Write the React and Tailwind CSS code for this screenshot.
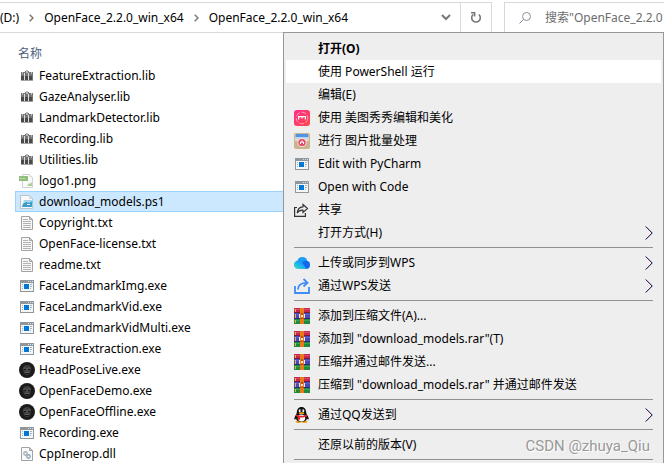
import React, { useState } from 'react';
import clsx from 'clsx';

const LibIcon = () => (
    <svg width="16" height="16" viewBox="0 0 16 16" shapeRendering="crispEdges" aria-hidden="true">
        <path fill="#757575" d="M2 4h4v9H2zM6 3h4v10H6zM10 4h4v9h-4z" />
        <path fill="#4a4a4a" d="M2 8h3v4H2zM6 8h3v4H6zM10 8h3v4h-3z" />
        <path fill="#b9b9b9" d="M3 4h1v2H3zM7 2h2v3H7zM12 4h1v2h-1z" />
        <path fill="#dedede" d="M5 5h1v8H5zM9 5h1v8H9z" />
        <path fill="#a3a3a3" d="M2 12h12v1H2z" />
    </svg>
);

const PngIcon = () => (
    <svg width="16" height="16" viewBox="0 0 16 16" aria-hidden="true">
        <path fill="#fafafa" stroke="#cfd3cf" d="M3.500 1.500h7l3 3v10h-10z" />
        <path fill="#dfe3df" d="M10.500 1.500v3h3z" />
        <path fill="#8fbf7a" d="M0 3h9v5H0z" />
        <path stroke="#c9e2bd" d="M1 5.500h6" strokeDasharray="2 1" />
        <path fill="#a9cf98" d="M8 13l2-3 1 1 2-2v4z" />
    </svg>
);

const Ps1Icon = () => (
    <svg width="16" height="16" viewBox="0 0 16 16" aria-hidden="true">
        <path fill="#f6f8f9" stroke="#b9c3ca" d="M1.500 1.500h9l3 3v10h-12z" />
        <path fill="#d5dce1" d="M10 1.500v3.500h3.500z" />
        <path fill="#a5d6ec" d="M5 6h9l-1 7H3z" />
        <path fill="#3b9bcb" d="M4 10l3-2 3 1 3.500-2-.8 6H3z" />
        <path stroke="#eaf7fd" fill="none" d="M8 10.500h3" />
    </svg>
);

const TxtIcon = () => (
    <svg width="16" height="16" viewBox="0 0 16 16" aria-hidden="true">
        <path fill="#f8f8f8" stroke="#a3a3a3" d="M2.500 1.500h8l3 3v10h-11z" />
        <path fill="#dddddd" stroke="#a3a3a3" d="M10.500 1.500v3h3z" />
        <path stroke="#b3b3b3" d="M4 4.500h5M4 6.500h8M4 8.500h8M4 10.500h8M4 12.500h8" />
    </svg>
);

const ExeIcon = () => (
    <svg width="16" height="16" viewBox="0 0 16 16" shapeRendering="crispEdges" aria-hidden="true">
        <path fill="#8f969c" d="M1 2h14v12H1z" />
        <path fill="#f5f6f7" d="M2 5h12v8H2z" />
        <path fill="#dfe2e5" d="M9 3h1v1H9zM11 3h1v1h-1zM13 3h1v1h-1z" />
        <path fill="#0078d7" d="M5 6h5v5H5z" />
        <path fill="#a9afb4" d="M3 6h1v1H3zM3 8h1v1H3zM3 10h1v1H3zM11 6h2v1h-2zM11 8h2v1h-2zM11 10h1v1h-1z" />
    </svg>
);

const FaceIcon = () => (
    <svg width="16" height="16" viewBox="0 0 16 16" aria-hidden="true">
        <circle cx="8" cy="8" r="8" fill="#1b1b1b" />
        <path fill="#3d3d3d" d="M4 6c0-4 8-4 8 0l-.5 4c-1 4-6 4-7 0z" />
        <path stroke="#6c6c6c" strokeWidth=".8" fill="none" d="M4.500 6.500l2-.7 1 1M8.500 6.800l1-1 2 .7M6 10.500h4M8 7v2" />
        <path fill="#151515" d="M5 7h2v1H5zM9 7h2v1H9zM6 11h4v1H6z" />
    </svg>
);

const DllIcon = () => (
    <svg width="16" height="16" viewBox="0 0 16 16" aria-hidden="true">
        <path fill="#fafafa" stroke="#a3a3a3" d="M2.500 1.500h8l3 3v10h-11z" />
        <path fill="#dedede" stroke="#a3a3a3" d="M10.500 1.500v3h3z" />
        <circle cx="6.500" cy="7.500" r="1.700" fill="none" stroke="#a3b1bc" strokeWidth="1.400" />
        <circle cx="9.500" cy="10.500" r="1.700" fill="none" stroke="#8ba9c0" strokeWidth="1.400" />
    </svg>
);

const MeituIcon = () => (
    <svg width="16" height="16" viewBox="0 0 16 16" aria-hidden="true">
        <defs>
            <linearGradient id="meitu" x1="0" y1="0" x2="1" y2="1">
                <stop offset="0" stopColor="#ff2c8c" />
                <stop offset="1" stopColor="#ff4747" />
            </linearGradient>
        </defs>
        <rect width="16" height="16" rx="3" fill="url(#meitu)" />
        <circle cx="8" cy="8" r="5.800" fill="none" stroke="#ffa9c4" strokeWidth=".9" strokeDasharray="5 1.500" />
        <path fill="none" stroke="#fff" strokeWidth="1.200" d="M4.600 9.500V6.600h6.800v2.900M8 6.600v1.900" />
    </svg>
);

const BatchIcon = () => (
    <svg width="16" height="16" viewBox="0 0 16 16" aria-hidden="true">
        <rect width="16" height="16" rx="2" fill="#c9b48f" />
        <path fill="#4f94e6" d="M2 1h12v3H2z" />
        <path fill="#b9d6f2" d="M1 4h14v2H1z" />
        <path fill="#e3dccb" d="M1 6h14v2H1z" />
        <circle cx="8" cy="9.500" r="4.600" fill="#f1dcd8" />
        <circle cx="8" cy="9.500" r="3.600" fill="#ea4468" />
        <path fill="none" stroke="#fff" d="M6.500 11V9h3v2M8 7.500v2" />
    </svg>
);

const ShareIcon = () => (
    <svg width="16" height="16" viewBox="0 0 16 16" fill="none" stroke="#333" strokeWidth="1.200" aria-hidden="true">
        <path d="M3 5.500H.600v8.900h10.800V11" />
        <path d="M9 2.500l4.500 4-4.500 4V8.200C6.500 8 4.500 9 3.200 11 3.500 7.500 5.500 5 9 4.800z" />
    </svg>
);

const CloudIcon = () => (
    <svg width="16" height="16" viewBox="0 0 16 16" aria-hidden="true">
        <defs>
            <linearGradient id="cloud" x1="0" y1="1" x2="1" y2="0">
                <stop offset="0" stopColor="#35e0c0" />
                <stop offset=".6" stopColor="#1aa5f5" />
                <stop offset="1" stopColor="#1473f0" />
            </linearGradient>
        </defs>
        <circle cx="8.400" cy="6.800" r="4.900" fill="#1c9df4" />
        <circle cx="11.900" cy="9.900" r="4.100" fill="#1268ec" />
        <path fill="url(#cloud)" d="M4.200 5.500c3.200 0 4.200 2.200 5.600 4.500S12 14 13 14H4.200a4.200 4.200 0 010-8.500z" />
    </svg>
);

const SendIcon = () => (
    <svg width="16" height="16" viewBox="0 0 16 16" fill="none" stroke="#3f8cf5" strokeWidth="1.800" aria-hidden="true">
        <path d="M1 8v7h14V9" />
        <path d="M4 11.500C4 7 7 4.800 13 4.800M9.500 1L13.500 4.800 9.500 8.500" />
    </svg>
);

const RarIcon = () => (
    <svg width="16" height="16" viewBox="0 0 16 16" shapeRendering="crispEdges" aria-hidden="true">
        <path fill="#c4284a" d="M0 0h16v5H0z" />
        <path fill="#d9486a" d="M0 1h16v1H0z" />
        <path fill="#4a48b8" d="M0 5h16v6H0z" />
        <path fill="#6361c8" d="M0 6h16v1H0z" />
        <path fill="#1f8a3c" d="M0 11h16v5H0z" />
        <path fill="#35a552" d="M0 12h16v1H0z" />
        <path fill="#7d1836" d="M0 4h16v1H0z" />
        <path fill="#2c2a78" d="M0 10h16v1H0z" />
        <path fill="#e87a1c" d="M6 0h4v16H6z" />
        <path fill="#f0e6dc" d="M5 6h1v4H5zM10 6h1v4h-1zM7 7h2v2H7z" />
        <path fill="#b85410" d="M7 5h2v2H7zM6 10h4v1H6z" />
        <path fill="#e3b341" d="M1 1h1v3H1zM1 6h1v4H1zM1 12h1v3H1z" />
    </svg>
);

const QqIcon = () => (
    <svg width="16" height="16" viewBox="0 0 16 16" aria-hidden="true">
        <ellipse cx="4.500" cy="14.800" rx="3" ry="1.200" fill="#f5a21b" />
        <ellipse cx="10.500" cy="14.800" rx="3" ry="1.200" fill="#f5a21b" />
        <path fill="#111" d="M2.800 5.500C2.800-1.800 12.200-1.800 12.200 5.500c0 1 .8 2 1.600 3.500.8 1.600 1.200 3 .6 3.400-.5.300-1-.4-1.500-1-.3 1.800-1.400 3.400-5.400 3.400s-5.100-1.600-5.400-3.400c-.5.600-1 1.300-1.500 1-.6-.4-.2-1.800.6-3.400.8-1.500 1.600-2.500 1.600-3.500z" />
        <ellipse cx="7.500" cy="11" rx="3.700" ry="3.400" fill="#fff" />
        <ellipse cx="5.900" cy="3.700" rx="1.200" ry="1.500" fill="#fff" />
        <ellipse cx="9.100" cy="3.700" rx="1.200" ry="1.500" fill="#fff" />
        <path fill="#111" d="M6 3.300h.8v1.200H6zM8.300 3.300h.8v1.200h-.8z" />
        <ellipse cx="7.500" cy="6.200" rx="2.800" ry=".9" fill="#f5a21b" />
        <path fill="#e6202a" d="M2.400 7.500c3 1.700 7.200 1.700 10.200 0l.5 1.700c-2 1.200-4.500 1.500-7 1.300v2.300H4V9.900c-.9-.2-1.600-.5-2.100-.8z" />
    </svg>
);

const SubmenuArrow = () => (
    <svg width="8" height="14" viewBox="0 0 8 14" fill="none" aria-hidden="true">
        <path stroke="#8cc0f0" d="M1.500.5L8 7l-6.500 6.500" />
        <path stroke="#6b2430" d="M.5.5L7 7 .5 13.500" />
    </svg>
);

const CrumbChevron = () => (
    <svg width="5" height="8" viewBox="0 0 5 8" fill="none" stroke="#777" strokeWidth="1.400" className="shrink-0" aria-hidden="true">
        <path d="M.7.700L4 4 .7 7.300" />
    </svg>
);

const files = [
    { name: 'FeatureExtraction.lib', icon: LibIcon },
    { name: 'GazeAnalyser.lib', icon: LibIcon },
    { name: 'LandmarkDetector.lib', icon: LibIcon },
    { name: 'Recording.lib', icon: LibIcon },
    { name: 'Utilities.lib', icon: LibIcon },
    { name: 'logo1.png', icon: PngIcon },
    { name: 'download_models.ps1', icon: Ps1Icon },
    { name: 'Copyright.txt', icon: TxtIcon },
    { name: 'OpenFace-license.txt', icon: TxtIcon },
    { name: 'readme.txt', icon: TxtIcon },
    { name: 'FaceLandmarkImg.exe', icon: ExeIcon },
    { name: 'FaceLandmarkVid.exe', icon: ExeIcon },
    { name: 'FaceLandmarkVidMulti.exe', icon: ExeIcon },
    { name: 'FeatureExtraction.exe', icon: ExeIcon },
    { name: 'HeadPoseLive.exe', icon: FaceIcon },
    { name: 'OpenFaceDemo.exe', icon: FaceIcon },
    { name: 'OpenFaceOffline.exe', icon: FaceIcon },
    { name: 'Recording.exe', icon: ExeIcon },
    { name: 'CppInerop.dll', icon: DllIcon },
];

// each inner array is a block of the menu, closed by a separator
const menuGroups = [
    [
        { label: '打开(O)', bold: true },
        { label: '使用 PowerShell 运行', active: true },
        { label: '编辑(E)' },
        { label: '使用 美图秀秀编辑和美化', icon: MeituIcon },
        { label: '进行 图片批量处理', icon: BatchIcon },
        { label: 'Edit with PyCharm', icon: ExeIcon },
        { label: 'Open with Code', icon: ExeIcon },
        { label: '共享', icon: ShareIcon },
        { label: '打开方式(H)', submenu: true },
    ],
    [
        { label: '上传或同步到WPS', icon: CloudIcon, submenu: true },
        { label: '通过WPS发送', icon: SendIcon, submenu: true },
    ],
    [
        { label: '添加到压缩文件(A)...', icon: RarIcon },
        { label: '添加到 "download_models.rar"(T)', icon: RarIcon },
        { label: '压缩并通过邮件发送...', icon: RarIcon },
        { label: '压缩到 "download_models.rar" 并通过邮件发送', icon: RarIcon },
    ],
    [{ label: '通过QQ发送到', icon: QqIcon, submenu: true }],
    [{ label: '还原以前的版本(V)' }],
];

const AddressBar = () => (
    <header className="flex gap-3 pt-[2px]">
        <nav aria-label="地址" className="flex h-[31px] min-w-0 flex-1 items-center border border-l-0 border-[#d9d9d9]">
            <div className="flex min-w-0 flex-1 items-center gap-[10px] whitespace-nowrap">
                <button type="button">(D:)</button>
                <CrumbChevron />
                <button type="button">OpenFace_2.2.0_win_x64</button>
                <CrumbChevron />
                <button type="button">OpenFace_2.2.0_win_x64</button>
            </div>
            <button type="button" aria-label="展开" className="px-[9px]">
                <svg width="10" height="7" viewBox="0 0 10 7" fill="none" stroke="#777" strokeWidth="2">
                    <path d="M1 1l4 4 4-4" />
                </svg>
            </button>
            <button type="button" aria-label="刷新" className="flex h-full w-[31px] items-center justify-center border-l border-[#d9d9d9]">
                <svg width="12" height="13" viewBox="0 0 12 13" fill="none" stroke="#777" strokeWidth="1.600">
                    <path d="M8.800 3.500A4.300 4.300 0 1 1 3.200 3.500" />
                    <path d="M1 1.800h3.600v3.600" />
                </svg>
            </button>
        </nav>
        <label className="flex h-[31px] w-40 items-center gap-[14px] border border-r-0 border-[#d9d9d9] pl-[14px]">
            <svg width="12" height="12" viewBox="0 0 12 12" fill="none" stroke="#8a8f99" className="shrink-0" aria-hidden="true">
                <circle cx="7.500" cy="4.500" r="4" />
                <path d="M4.700 7.300L.5 11.500" />
            </svg>
            <input type="text" aria-label="搜索" placeholder={'搜索"OpenFace_2.2.0'} className="w-full min-w-0 outline-none placeholder:text-[#6d6d6d]" />
        </label>
    </header>
);

const FileList = ({ selected, onSelect }) => (
    <main className="pl-[15px]">
        <h2 className="flex h-8 items-center pt-[10px] pl-[3px] text-[#4c607a]">名称</h2>
        <ul>
            {files.map(({ name, icon: Icon }) => (
                <li key={name}>
                    <button
                        type="button"
                        onClick={() => onSelect(name)}
                        className={clsx(
                            'flex h-[21px] w-full items-center gap-1 border pl-[3px] text-left',
                            name === selected ? 'border-[#99d1ff] bg-[#cce8ff]' : 'border-transparent'
                        )}
                    >
                        <Icon />
                        {name}
                    </button>
                </li>
            ))}
        </ul>
    </main>
);

const ContextMenu = () => (
    <div role="menu" className="absolute top-8 right-0 left-[283px] border border-[#979797] bg-[#eeeeee] px-[2px] pt-1">
        {menuGroups.map((group, i) => (
            <div key={i} role="group">
                {group.map(({ label, icon: Icon, bold, active, submenu }) => (
                    <button
                        key={label}
                        type="button"
                        role="menuitem"
                        className={clsx(
                            'flex h-[23px] w-full items-center gap-2 px-2 text-left whitespace-nowrap',
                            active && 'bg-white',
                            bold && 'font-bold'
                        )}
                    >
                        <span className="h-4 w-4 shrink-0">{Icon && <Icon />}</span>
                        <span className="flex-1">{label}</span>
                        {submenu && <SubmenuArrow />}
                    </button>
                ))}
                <hr className="mx-2 my-[3px] border-[#919191]" />
            </div>
        ))}
    </div>
);

export default function App() {
    const [selected, setSelected] = useState('download_models.ps1');

    return (
        <div className="relative h-screen overflow-hidden bg-white font-['Noto_Sans','Noto_Sans_CJK_SC',sans-serif] text-[12px] leading-4 text-black">
            <AddressBar />
            <FileList selected={selected} onSelect={setSelected} />
            <ContextMenu />
            <p className="pointer-events-none absolute right-[14px] bottom-[7px] font-['Roboto',sans-serif] text-[15px] leading-5 text-[#999999] [text-shadow:1px_1px_0_#ffffff]">
                CSDN @zhuya_Qiu
            </p>
        </div>
    );
}
